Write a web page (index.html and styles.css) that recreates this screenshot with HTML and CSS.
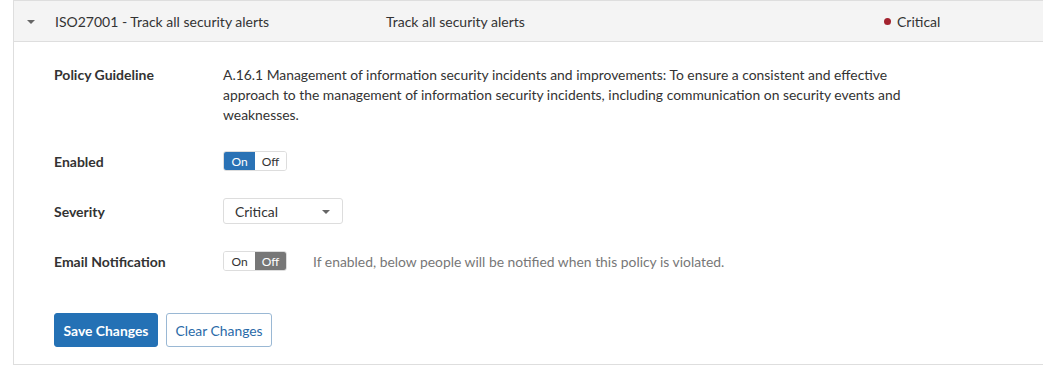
FILE: index.html
```html
<!DOCTYPE html>
<html>
<head>
<meta charset="utf-8">
<link rel="stylesheet" href="styles.css">
</head>
<body>
<div class="panel">
  <div class="panel-head">
    <span class="caret"></span>
    <span class="head-title">ISO27001 - Track all security alerts</span>
    <span class="head-desc">Track all security alerts</span>
    <span class="head-sev"><span class="dot"></span>Critical</span>
  </div>
  <div class="panel-body">
    <div class="row row-guide">
      <div class="label">Policy Guideline</div>
      <div class="value guide">A.16.1 Management of information security incidents and improvements: To ensure a consistent and effective approach to the management of information security incidents, including communication on security events and weaknesses.</div>
    </div>
    <div class="row row-enabled">
      <div class="label">Enabled</div>
      <div class="value">
        <div class="toggle"><span class="seg active">On</span><span class="seg">Off</span></div>
      </div>
    </div>
    <div class="row row-sev">
      <div class="label">Severity</div>
      <div class="value">
        <div class="select"><span>Critical</span><span class="sel-caret"></span></div>
      </div>
    </div>
    <div class="row row-email">
      <div class="label">Email Notification</div>
      <div class="value inline">
        <div class="toggle"><span class="seg">On</span><span class="seg active-off">Off</span></div>
        <span class="help">If enabled, below people will be notified when this policy is violated.</span>
      </div>
    </div>
    <div class="actions">
      <button class="btn btn-primary">Save Changes</button>
      <button class="btn btn-default">Clear Changes</button>
    </div>
  </div>
</div>
</body>
</html>
```
FILE: styles.css
```css
html, body {
  margin: 0;
  padding: 0;
  background: #fff;
}
body {
  font-family: Lato, "Liberation Sans", sans-serif;
  color: #333;
  padding-left: 13px;
}
.panel {
  border: 1px solid #dedede;
  border-right: none;
  height: 365px;
  box-sizing: border-box;
}
.panel-head {
  height: 40px;
  background: #f4f4f4;
  border-bottom: 1px solid #dedede;
  display: flex;
  align-items: center;
  font-size: 14px;
  color: #333;
}
.caret {
  width: 0;
  height: 0;
  border-left: 4px solid transparent;
  border-right: 4px solid transparent;
  border-top: 4px solid #666;
  margin-left: 13px;
  margin-right: 20px;
  margin-top: 1px;
}
.head-title {
  width: 331px;
}
.head-desc {
  width: 498px;
}
.head-sev {
  display: flex;
  align-items: center;
}
.dot {
  width: 7px;
  height: 7px;
  border-radius: 50%;
  background: #a3232f;
  margin-right: 6px;
}
.panel-body {
  padding: 23px 0 0 40px;
}
.row {
  display: grid;
  grid-template-columns: 169px 690px;
  align-items: center;
  font-size: 13.88px;
}
.label {
  font-weight: 700;
  color: #333;
  font-size: 14px;
}
.row-guide {
  align-items: start;
}
.guide {
  line-height: 20px;
  color: #333;
}
.row-guide .label {
  line-height: 20px;
}
.row-enabled {
  margin-top: 26px;
}
.row-sev {
  margin-top: 27px;
}
.row-email {
  margin-top: 27px;
}
.inline {
  display: flex;
  align-items: center;
}
.toggle {
  display: inline-flex;
  border: 1px solid #ddd;
  border-radius: 3px;
  height: 20px;
  box-sizing: border-box;
  font-size: 12px;
  overflow: hidden;
}
.seg {
  display: flex;
  align-items: center;
  justify-content: center;
  width: 31px;
  color: #333;
  background: #fff;
}
.active {
  background: #2a72b5;
  color: #fff;
}
.active-off {
  background: #777;
  color: #fff;
}
.help {
  margin-left: 26px;
  color: #777;
  font-size: 13.88px;
}
.select {
  width: 120px;
  height: 26px;
  box-sizing: border-box;
  border: 1px solid #ddd;
  border-radius: 3px;
  display: flex;
  align-items: center;
  justify-content: space-between;
  padding: 0 12px 0 11px;
  font-size: 13.88px;
  color: #333;
}
.sel-caret {
  width: 0;
  height: 0;
  border-left: 4px solid transparent;
  border-right: 4px solid transparent;
  border-top: 4px solid #666;
  margin-top: 1px;
}
.actions {
  margin-top: 42px;
  display: flex;
  gap: 8px;
}
.btn {
  height: 34px;
  border-radius: 3px;
  font-family: Lato, "Liberation Sans", sans-serif;
  font-size: 13.88px;
  padding: 0;
  box-sizing: border-box;
  cursor: pointer;
}
.btn-primary {
  background: #2471b5;
  border: 1px solid #2471b5;
  color: #fff;
  font-weight: 700;
  width: 104px;
}
.btn-default {
  background: #fff;
  border: 1px solid #9ab8d4;
  color: #2a6aa8;
  width: 106px;
}
```
